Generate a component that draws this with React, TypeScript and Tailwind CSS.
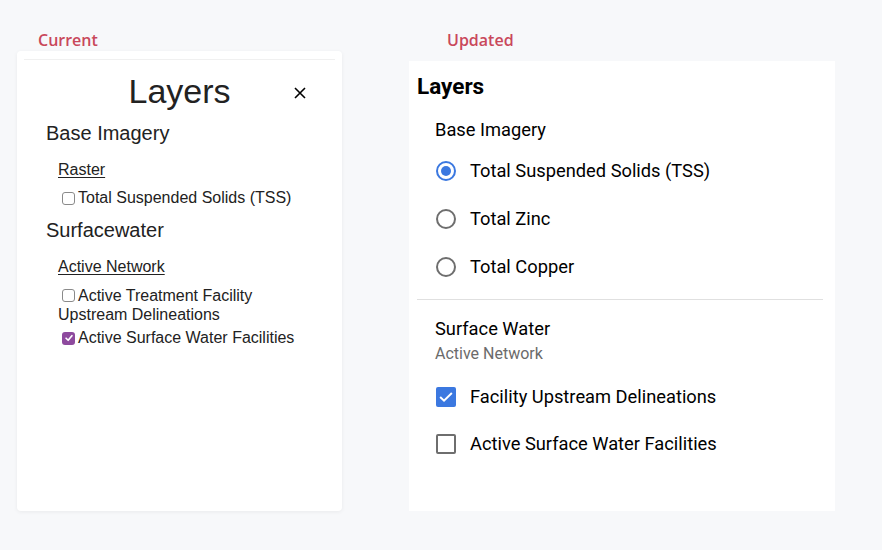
import React from 'react';

const baseOptions = [
  { label: 'Total Suspended Solids (TSS)', selected: true },
  { label: 'Total Zinc', selected: false },
  { label: 'Total Copper', selected: false },
];

const surfaceOptions = [
  { label: 'Facility Upstream Delineations', checked: true },
  { label: 'Active Surface Water Facilities', checked: false },
];

const OldBox = ({ checked }: { checked?: boolean }) => (
  <span
    className={`inline-flex w-[13px] h-[13px] ml-[4px] mr-[3px] rounded-[3px] items-center justify-center shrink-0 align-[-1px] ${
      checked ? 'bg-[#8e4a9e]' : 'border border-[#8a8a8a] bg-white'
    }`}
  >
    {checked && (
      <svg viewBox="0 0 12 12" className="w-[10px] h-[10px]">
        <path d="M2.5 6.3 L5 8.7 L9.5 3.3" fill="none" stroke="white" strokeWidth="2" strokeLinecap="round" strokeLinejoin="round" />
      </svg>
    )}
  </span>
);

const Radio = ({ selected }: { selected: boolean }) => (
  <span
    className={`w-[20px] h-[20px] rounded-full border-2 flex items-center justify-center shrink-0 ${
      selected ? 'border-[#3b78e0]' : 'border-[#6e6e6e]'
    }`}
  >
    {selected && <span className="w-[10px] h-[10px] rounded-full bg-[#3b78e0]" />}
  </span>
);

const Check = ({ checked }: { checked: boolean }) => (
  <span
    className={`w-[20px] h-[20px] rounded-[2px] flex items-center justify-center shrink-0 ${
      checked ? 'bg-[#3b78e0]' : 'border-2 border-[#6e6e6e]'
    }`}
  >
    {checked && (
      <svg viewBox="0 0 20 20" className="w-[18px] h-[18px]">
        <path d="M3.5 10 L7.8 14 L16.5 5.5" fill="none" stroke="white" strokeWidth="2.2" />
      </svg>
    )}
  </span>
);

export default function App() {
  return (
    <div className="w-[882px] h-[550px] bg-[#f7f8fa] flex pl-[17px] pt-[30px] gap-[67px] overflow-hidden">
      {/* Current */}
      <div className="w-[325px] flex flex-col">
        <div className="h-[21px] pl-[21px] text-[16px] leading-[21px] font-semibold text-[#c9485b] [font-family:'Open_Sans',sans-serif]">
          Current
        </div>
        <div className="h-[460px] bg-white rounded-[4px] shadow-[0_1px_4px_rgba(0,0,0,0.06)] pt-[8px] text-[#222] [font-family:'Liberation_Sans',Arial,sans-serif]">
          <div className="mx-[7px] h-px bg-[#f0f0f0]" />
          <div className="relative mt-[12px] h-[38px] text-[34px] leading-[38px] text-center">
            Layers
            <svg viewBox="0 0 12 12" className="absolute left-[277px] top-[15px] w-[12px] h-[12px]">
              <path d="M1 1 L11 11 M11 1 L1 11" stroke="black" strokeWidth="1.6" />
            </svg>
          </div>
          <div className="pl-[29px]">
            <div className="mt-[11px] text-[20px] leading-[24px]">Base Imagery</div>
            <div className="pl-[12px] text-[16px]">
              <div className="mt-[16px] leading-[18px] underline underline-offset-2">Raster</div>
              <div className="mt-[10px] leading-[18px] flex items-center">
                <OldBox />
                Total Suspended Solids (TSS)
              </div>
            </div>
            <div className="mt-[11px] text-[20px] leading-[24px]">Surfacewater</div>
            <div className="pl-[12px] text-[16px]">
              <div className="mt-[16px] leading-[18px] underline underline-offset-2">Active Network</div>
              <div className="mt-[10px] leading-[19px] w-[240px]">
                <OldBox />
                Active Treatment Facility Upstream Delineations
              </div>
              <div className="mt-[5px] leading-[18px] flex items-center">
                <OldBox checked />
                Active Surface Water Facilities
              </div>
            </div>
          </div>
        </div>
      </div>

      {/* Updated */}
      <div className="w-[426px] flex flex-col">
        <div className="h-[31px] pl-[38px] text-[16px] leading-[21px] font-semibold text-[#c9485b] [font-family:'Open_Sans',sans-serif]">
          Updated
        </div>
        <div className="h-[450px] bg-white pt-[13px] pl-[8px] pr-[12px] text-black [font-family:Roboto,sans-serif]">
          <div className="text-[22.5px] leading-[24px] font-bold">Layers</div>
          <div className="pl-[18px]">
            <div className="mt-[21px] text-[18.3px] leading-[22px]">Base Imagery</div>
            <div className="mt-[6px] flex flex-col">
              {baseOptions.map((o) => (
                <div key={o.label} className="h-[48px] flex items-center gap-[14px] pl-px text-[18.3px]">
                  <Radio selected={o.selected} />
                  {o.label}
                </div>
              ))}
            </div>
          </div>
          <div className="mt-[8px] h-px bg-[#e0e0e0]" />
          <div className="pl-[18px]">
            <div className="mt-[18px] text-[18.3px] leading-[22px]">Surface Water</div>
            <div className="mt-[4px] text-[16px] leading-[20px] text-[#6b6b6b]">Active Network</div>
            <div className="mt-[9px] flex flex-col">
              {surfaceOptions.map((o) => (
                <div key={o.label} className="h-[47px] flex items-center gap-[14px] pl-px text-[18.3px]">
                  <Check checked={o.checked} />
                  {o.label}
                </div>
              ))}
            </div>
          </div>
        </div>
      </div>
    </div>
  );
}
